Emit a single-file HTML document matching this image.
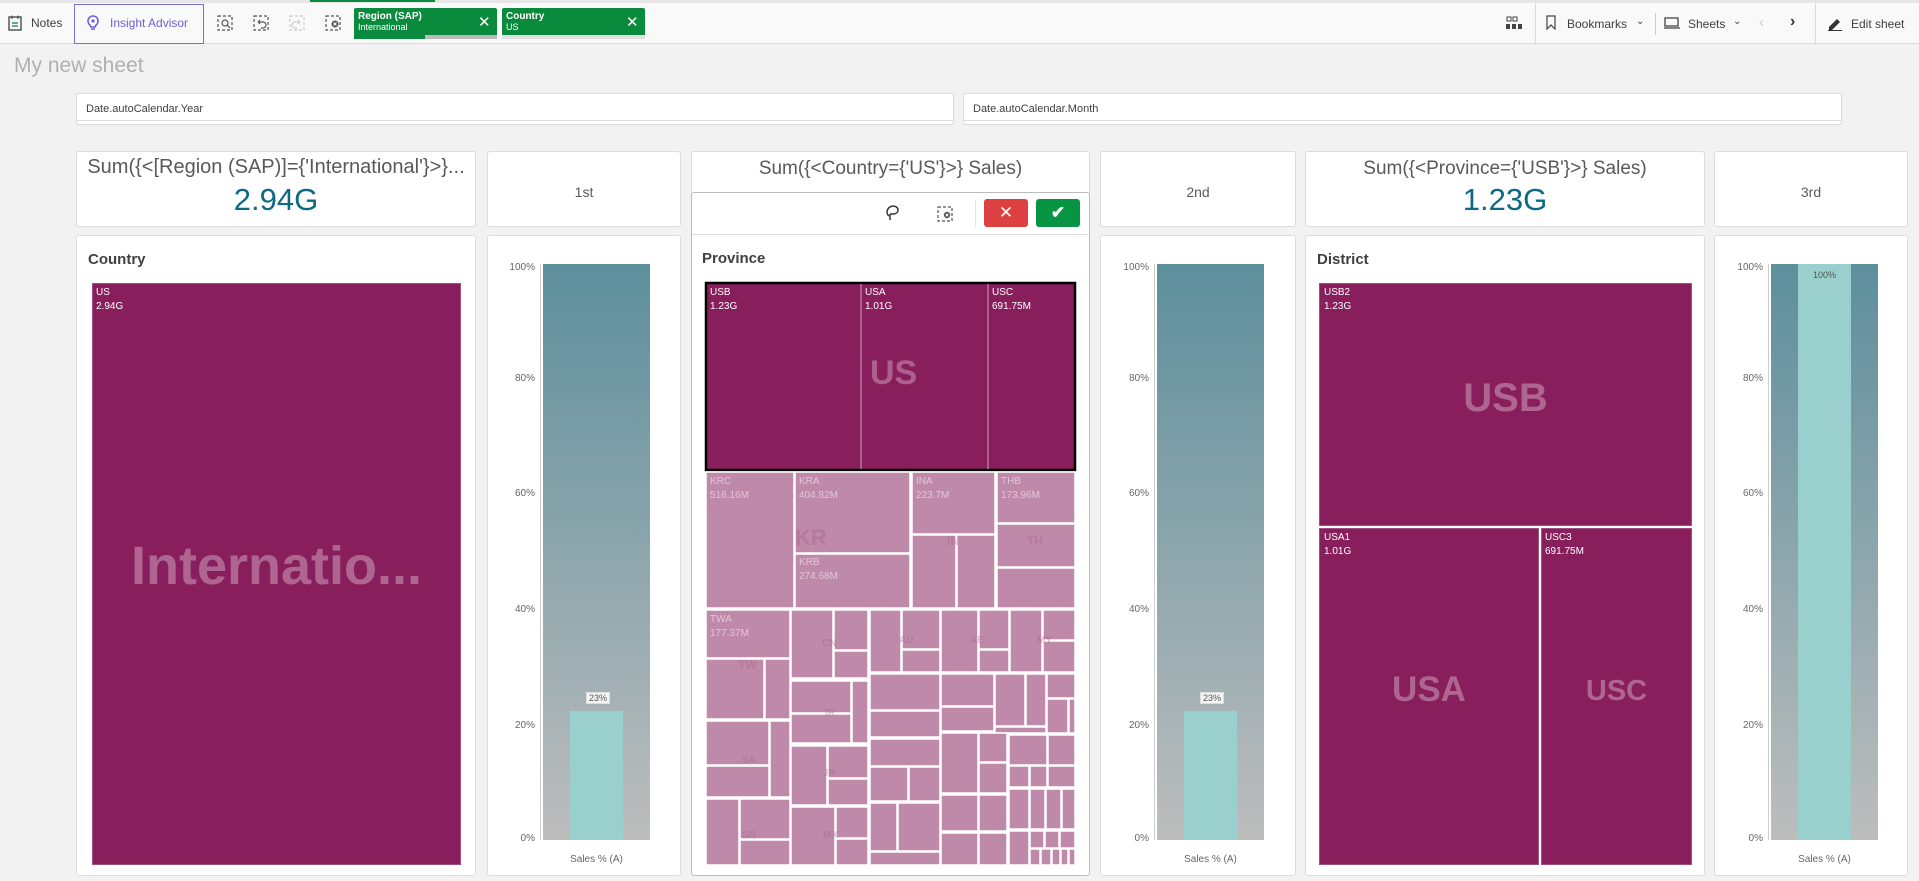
<!DOCTYPE html>
<html><head><meta charset="utf-8"><style>
*{box-sizing:border-box;margin:0;padding:0}
body{width:1919px;height:881px;background:#f2f2f2;font-family:"Liberation Sans",sans-serif;position:relative;overflow:hidden;color:#404040}
.a{position:absolute}
.panel{position:absolute;background:#fff;border:1px solid #dcdcdc;border-radius:3px}
.kt{position:absolute;left:0;right:0;text-align:center;font-size:19px;color:#595959;white-space:nowrap;overflow:hidden}
.kv{position:absolute;left:0;right:0;text-align:center;font-size:31px;color:#0e6a83}
.ttl{position:absolute;font-size:15px;font-weight:bold;color:#404040}
.lbl{position:absolute;font-size:10px;color:#fff;line-height:14px}
.ax{position:absolute;font-size:10px;color:#666;text-align:right;width:30px}
.tb{font-size:12px;color:#404040}
</style></head><body>
<div class="a" style="left:0;top:0;width:1919px;height:3px;background:#e6e6e6"></div>
<div class="a" style="left:310px;top:0;width:125px;height:2px;background:#0a8a3c"></div>
<div class="a" style="left:0;top:3px;width:1919px;height:41px;background:#f9f9f9;border-bottom:1px solid #dadada"></div>
<svg class="a" style="left:8px;top:15px" width="14" height="16" viewBox="0 0 14 16"><rect x="1" y="2" width="12" height="13" fill="none" stroke="#404040" stroke-width="1.3"/><line x1="4" y1="0.5" x2="4" y2="4" stroke="#404040"/><line x1="10" y1="0.5" x2="10" y2="4" stroke="#404040"/><line x1="4" y1="8" x2="10" y2="8" stroke="#0a8a3c" stroke-width="1.3"/><line x1="4" y1="11" x2="10" y2="11" stroke="#0a8a3c" stroke-width="1.3"/></svg>
<div class="a tb" style="left:31px;top:16px">Notes</div>
<div class="a" style="left:74px;top:4px;width:130px;height:40px;border:1px solid #7a6fd8;background:#f9f9f9"></div>
<svg class="a" style="left:87px;top:15px" width="12" height="16" viewBox="0 0 12 16"><path d="M6 1a5 5 0 0 1 3 9l-1 2H4l-1-2A5 5 0 0 1 6 1z" fill="none" stroke="#6b5fd3" stroke-width="1.6"/><circle cx="6" cy="6" r="1.6" fill="#6b5fd3"/><line x1="4" y1="14" x2="8" y2="14" stroke="#6b5fd3" stroke-width="1.5"/></svg>
<div class="a tb" style="left:110px;top:16px;color:#6b5fd3">Insight Advisor</div>
<svg class="a" style="left:217px;top:15px" width="130" height="16">
<g fill="none" stroke="#555" stroke-width="1.2" stroke-dasharray="3 2"><rect x="1" y="1" width="14" height="14"/><rect x="37" y="1" width="14" height="14"/><rect x="73" y="1" width="14" height="14" stroke="#ccc"/><rect x="109" y="1" width="14" height="14"/></g>
<circle cx="8" cy="8" r="3" fill="none" stroke="#555" stroke-width="1.2"/><line x1="10" y1="10" x2="13" y2="13" stroke="#555" stroke-width="1.2"/>
<path d="M41 7h5a3 3 0 0 1 0 6h-2M41 7l2-2M41 7l2 2" fill="none" stroke="#555" stroke-width="1.2"/>
<path d="M83 7h-5a3 3 0 0 0 0 6h2M83 7l-2-2M83 7l-2 2" fill="none" stroke="#ccc" stroke-width="1.2"/>
<circle cx="118" cy="9" r="3.5" fill="#555"/><path d="M116.5 7.5l3 3M119.5 7.5l-3 3" stroke="#fff" stroke-width="1"/></svg>
<div class="a" style="left:354px;top:8px;width:143px;height:28px;background:#0a8a3c;border-radius:2px"></div>
<div class="a" style="left:354px;top:35px;width:143px;height:4px;background:#bbb"></div>
<div class="a" style="left:354px;top:35px;width:71px;height:4px;background:#0a8a3c"></div>
<div class="a" style="left:358px;top:11px;font-size:10px;color:#fff;font-weight:bold;line-height:11px">Region (SAP)<br><span style="font-weight:normal;font-size:9px">International</span></div>
<div class="a" style="left:478px;top:13px;font-size:15px;color:#fff">✕</div>
<div class="a" style="left:502px;top:8px;width:143px;height:28px;background:#0a8a3c;border-radius:2px"></div>
<div class="a" style="left:502px;top:35px;width:143px;height:4px;background:#e0e0e0"></div>
<div class="a" style="left:506px;top:11px;font-size:10px;color:#fff;font-weight:bold;line-height:11px">Country<br><span style="font-weight:normal;font-size:9px">US</span></div>
<div class="a" style="left:626px;top:13px;font-size:15px;color:#fff">✕</div>
<svg class="a" style="left:1506px;top:16px" width="16" height="14"><rect x="1" y="1" width="4" height="4" fill="none" stroke="#444"/><rect x="7" y="1" width="4" height="4" fill="none" stroke="#444"/><rect x="0" y="8" width="4" height="5" fill="#444"/><rect x="6" y="8" width="4" height="5" fill="#444"/><rect x="12" y="8" width="4" height="5" fill="#444"/></svg>
<div class="a" style="left:1535px;top:3px;width:1px;height:41px;background:#dadada"></div>
<svg class="a" style="left:1546px;top:15px" width="10" height="15"><path d="M1 1h8v13l-4-4-4 4z" fill="none" stroke="#444" stroke-width="1.2"/></svg>
<div class="a tb" style="left:1567px;top:17px">Bookmarks</div>
<div class="a" style="left:1636px;top:16px;font-size:10px">⌄</div>
<div class="a" style="left:1655px;top:13px;width:1px;height:22px;background:#ccc"></div>
<svg class="a" style="left:1664px;top:17px" width="16" height="12"><rect x="1" y="1" width="13" height="8" fill="none" stroke="#444" stroke-width="1.3"/><line x1="0" y1="11" x2="16" y2="11" stroke="#444" stroke-width="1.3"/></svg>
<div class="a tb" style="left:1688px;top:17px">Sheets</div>
<div class="a" style="left:1733px;top:16px;font-size:10px">⌄</div>
<div class="a" style="left:1759px;top:14px;font-size:15px;color:#ccc">‹</div>
<div class="a" style="left:1790px;top:13px;font-size:16px;color:#333;font-weight:bold">›</div>
<div class="a" style="left:1815px;top:3px;width:1px;height:41px;background:#dadada"></div>
<svg class="a" style="left:1827px;top:15px" width="16" height="16"><path d="M2 12l8-8 3 3-8 8H2z" fill="#333"/><line x1="1" y1="15.5" x2="15" y2="15.5" stroke="#333"/></svg>
<div class="a tb" style="left:1851px;top:17px">Edit sheet</div>

<div class="a" style="left:14px;top:54px;font-size:21px;color:#b0b0b0">My new sheet</div>

<div class="panel" style="left:76px;top:93px;width:878px;height:32px;border-radius:2px"><div class="a" style="left:9px;top:9px;font-size:11px;color:#404040">Date.autoCalendar.Year</div><div class="a" style="left:0;right:0;bottom:3px;height:1px;background:#ddd"></div></div>
<div class="panel" style="left:963px;top:93px;width:879px;height:32px;border-radius:2px"><div class="a" style="left:9px;top:9px;font-size:11px;color:#404040">Date.autoCalendar.Month</div><div class="a" style="left:0;right:0;bottom:3px;height:1px;background:#ddd"></div></div>

<div class="panel" style="left:76px;top:151px;width:400px;height:76px"><div class="kt" style="top:4px;font-size:20px">Sum({&lt;[Region (SAP)]={'International'}&gt;}...</div><div class="kv" style="top:30px">2.94G</div></div>
<div class="panel" style="left:487px;top:151px;width:194px;height:76px"><div class="kt" style="top:32px;font-size:14px">1st</div></div>
<div class="panel" style="left:691px;top:151px;width:399px;height:76px;border-bottom:none"><div class="kt" style="top:6px;font-size:19px">Sum({&lt;Country={'US'}&gt;} Sales)</div></div>
<div class="panel" style="left:1100px;top:151px;width:196px;height:76px"><div class="kt" style="top:32px;font-size:14px">2nd</div></div>
<div class="panel" style="left:1305px;top:151px;width:400px;height:76px"><div class="kt" style="top:6px;font-size:19px">Sum({&lt;Province={'USB'}&gt;} Sales)</div><div class="kv" style="top:30px">1.23G</div></div>
<div class="panel" style="left:1714px;top:151px;width:194px;height:76px"><div class="kt" style="top:32px;font-size:14px">3rd</div></div>

<div class="panel" style="left:76px;top:235px;width:400px;height:641px">
<div class="ttl" style="left:11px;top:15px">Country</div></div>
<div class="a" style="left:92px;top:283px;width:369px;height:582px;background:#881e5c;border:1px solid #a0507e"></div>
<div class="lbl" style="left:96px;top:286px">US<br>2.94G</div>
<div class="a" style="left:92px;top:535px;width:369px;text-align:center;font-size:54px;font-weight:bold;color:rgba(255,255,255,0.32);white-space:nowrap">Internatio...</div>

<div class="panel" style="left:487px;top:235px;width:194px;height:641px"></div>
<div class="a" style="left:543px;top:264px;width:107px;height:576px;background:linear-gradient(#5d8f9c,#bdbdbd)"></div>
<div class="a" style="left:570px;top:711px;width:53px;height:129px;background:#99cfcc"></div>
<div class="a" style="left:586px;top:692px;font-size:9px;color:#555;background:#f4f4f4;border:1px solid #ddd;padding:0 2px">23%</div>
<div class="a" style="left:540px;top:264px;width:1px;height:576px;background:#ccc"></div>
<div class="ax" style="left:505px;top:262px">100%</div><div class="ax" style="left:505px;top:373px">80%</div><div class="ax" style="left:505px;top:488px">60%</div><div class="ax" style="left:505px;top:604px">40%</div><div class="ax" style="left:505px;top:720px">20%</div><div class="ax" style="left:505px;top:833px">0%</div>
<div class="a" style="left:543px;top:854px;width:107px;text-align:center;font-size:10px;color:#666">Sales % (A)</div>

<div class="a" style="left:691px;top:192px;width:399px;height:684px;background:#fff;border:1px solid #bcbcbc;border-radius:3px"></div>
<div class="a" style="left:692px;top:234px;width:397px;height:1px;background:#ddd"></div>
<svg class="a" style="left:885px;top:204px" width="16" height="18"><path d="M4 12C1 10 1 3 8 2c6 0 7 7 1 8H5" fill="none" stroke="#333" stroke-width="1.5"/><path d="M5 10v6" stroke="#333" stroke-width="1.5"/></svg>
<svg class="a" style="left:937px;top:206px" width="16" height="16"><rect x="1" y="1" width="14" height="14" fill="none" stroke="#555" stroke-dasharray="3 2" stroke-width="1.2"/><circle cx="10" cy="9" r="3.2" fill="#555"/><path d="M8.7 7.7l2.6 2.6M11.3 7.7l-2.6 2.6" stroke="#fff" stroke-width="0.9"/></svg>
<div class="a" style="left:975px;top:200px;width:1px;height:27px;background:#e3e3e3"></div>
<div class="a" style="left:984px;top:199px;width:44px;height:28px;background:#dc4040;border-radius:3px;color:#fff;text-align:center;font-size:17px;line-height:28px">✕</div>
<div class="a" style="left:1036px;top:199px;width:44px;height:28px;background:#079443;border-radius:3px;color:#fff;text-align:center;font-size:17px;line-height:28px;font-weight:bold">✔</div>
<div class="ttl" style="left:702px;top:250px">Province</div>
<svg class="a" style="left:704px;top:281px" width="374" height="586">
<g transform="translate(-704,-281)">
<rect x="706" y="283" width="369" height="187" fill="#881e5c" stroke="#000" stroke-width="2.5"/>
<line x1="861" y1="284" x2="861" y2="469" stroke="#c68aac" stroke-width="1.2"/>
<line x1="988" y1="284" x2="988" y2="469" stroke="#c68aac" stroke-width="1.2"/>
<text x="870" y="384" font-size="34" font-weight="bold" fill="rgba(255,255,255,0.3)" font-family="Liberation Sans">US</text>
<g font-family="Liberation Sans" font-size="10" fill="#fff">
<text x="710" y="295">USB</text><text x="710" y="309">1.23G</text>
<text x="865" y="295">USA</text><text x="865" y="309">1.01G</text>
<text x="992" y="295">USC</text><text x="992" y="309">691.75M</text>
</g>
<g fill="#bf8aa9" stroke="#fff" stroke-width="1.5">
<rect x="706" y="472" width="88" height="136"/>
<rect x="795" y="472" width="115" height="81"/><rect x="795" y="554" width="115" height="54"/>
<rect x="912" y="472" width="83" height="62"/><rect x="912" y="535" width="44" height="73"/><rect x="957" y="535" width="38" height="73"/>
<rect x="997" y="472" width="78" height="51"/><rect x="997" y="524" width="78" height="43"/><rect x="997" y="568" width="78" height="40"/>
<rect x="706" y="610" width="84" height="48"/><rect x="706" y="659" width="58" height="60"/><rect x="765" y="659" width="25" height="60"/>
<rect x="706" y="721" width="63" height="44"/><rect x="706" y="766" width="63" height="31"/><rect x="770" y="721" width="20" height="76"/>
<rect x="706" y="799" width="33" height="66"/><rect x="740" y="799" width="50" height="40"/><rect x="740" y="840" width="50" height="25"/>
<rect x="791" y="610" width="42" height="68"/><rect x="834" y="610" width="34" height="40"/><rect x="834" y="651" width="34" height="27"/>
<rect x="791" y="681" width="60" height="32"/><rect x="791" y="714" width="60" height="29"/><rect x="852" y="681" width="16" height="62"/>
<rect x="791" y="746" width="36" height="59"/><rect x="828" y="746" width="40" height="32"/><rect x="828" y="779" width="40" height="26"/>
<rect x="791" y="807" width="44" height="58"/><rect x="836" y="807" width="32" height="31"/><rect x="836" y="839" width="32" height="26"/>
<rect x="870" y="610" width="31" height="62"/><rect x="902" y="610" width="38" height="39"/><rect x="902" y="650" width="38" height="22"/>
<rect x="870" y="674" width="70" height="36"/><rect x="870" y="711" width="70" height="26"/>
<rect x="870" y="739" width="70" height="27"/><rect x="870" y="767" width="38" height="34"/><rect x="909" y="767" width="31" height="34"/>
<rect x="870" y="803" width="27" height="48"/><rect x="898" y="803" width="42" height="48"/><rect x="870" y="852" width="70" height="13"/>
<rect x="941" y="610" width="37" height="62"/><rect x="979" y="610" width="30" height="39"/><rect x="979" y="650" width="30" height="22"/>
<rect x="1010" y="610" width="32" height="62"/><rect x="1043" y="610" width="32" height="30"/><rect x="1043" y="641" width="32" height="31"/>
<rect x="941" y="674" width="53" height="32"/><rect x="941" y="707" width="53" height="24"/>
<rect x="995" y="674" width="30" height="52"/><rect x="1026" y="674" width="20" height="52"/><rect x="995" y="727" width="51" height="6"/>
<rect x="1047" y="674" width="28" height="24"/><rect x="1047" y="699" width="21" height="34"/><rect x="1069" y="699" width="6" height="34"/>
<rect x="941" y="733" width="37" height="60"/><rect x="979" y="733" width="28" height="29"/><rect x="979" y="763" width="28" height="30"/>
<rect x="941" y="795" width="37" height="36"/><rect x="979" y="795" width="28" height="36"/><rect x="941" y="833" width="37" height="32"/><rect x="979" y="833" width="28" height="32"/>
<rect x="1009" y="735" width="38" height="30"/><rect x="1009" y="766" width="20" height="21"/><rect x="1030" y="766" width="17" height="21"/>
<rect x="1048" y="735" width="27" height="30"/><rect x="1048" y="766" width="27" height="21"/>
<rect x="1009" y="789" width="20" height="40"/><rect x="1030" y="789" width="15" height="40"/><rect x="1046" y="789" width="15" height="40"/><rect x="1062" y="789" width="13" height="40"/>
<rect x="1009" y="831" width="20" height="34"/><rect x="1030" y="831" width="14" height="17"/><rect x="1045" y="831" width="14" height="17"/><rect x="1060" y="831" width="15" height="17"/>
<rect x="1030" y="849" width="10" height="16"/><rect x="1041" y="849" width="10" height="16"/><rect x="1052" y="849" width="8" height="16"/><rect x="1061" y="849" width="7" height="16"/><rect x="1069" y="849" width="6" height="16"/>
</g>
<g font-family="Liberation Sans" font-size="10" fill="#e3c5d6">
<text x="710" y="484">KRC</text><text x="710" y="498">516.16M</text>
<text x="799" y="484">KRA</text><text x="799" y="498">404.82M</text>
<text x="799" y="565">KRB</text><text x="799" y="579">274.68M</text>
<text x="916" y="484">INA</text><text x="916" y="498">223.7M</text>
<text x="1001" y="484">THB</text><text x="1001" y="498">173.96M</text>
<text x="710" y="622">TWA</text><text x="710" y="636">177.37M</text>
</g>
<g font-family="Liberation Sans" fill="rgba(160,90,130,0.35)" font-weight="bold">
<text x="795" y="545" font-size="22">KR</text><text x="947" y="545" font-size="12">IN</text><text x="1027" y="545" font-size="12">TH</text>
<text x="738" y="669" font-size="12">TW</text><text x="742" y="763" font-size="10">SA</text><text x="742" y="838" font-size="10">SG</text>
<text x="822" y="646" font-size="10">CN</text><text x="825" y="716" font-size="10">IR</text><text x="823" y="776" font-size="10">JP</text><text x="823" y="838" font-size="10">MX</text>
<text x="899" y="643" font-size="10">AU</text><text x="970" y="643" font-size="10">AE</text><text x="1037" y="643" font-size="10">MY</text>
</g>
</g></svg>

<div class="panel" style="left:1100px;top:235px;width:196px;height:641px"></div>
<div class="a" style="left:1157px;top:264px;width:107px;height:576px;background:linear-gradient(#5d8f9c,#bdbdbd)"></div>
<div class="a" style="left:1184px;top:711px;width:53px;height:129px;background:#99cfcc"></div>
<div class="a" style="left:1200px;top:692px;font-size:9px;color:#555;background:#f4f4f4;border:1px solid #ddd;padding:0 2px">23%</div>
<div class="a" style="left:1154px;top:264px;width:1px;height:576px;background:#ccc"></div>
<div class="ax" style="left:1119px;top:262px">100%</div><div class="ax" style="left:1119px;top:373px">80%</div><div class="ax" style="left:1119px;top:488px">60%</div><div class="ax" style="left:1119px;top:604px">40%</div><div class="ax" style="left:1119px;top:720px">20%</div><div class="ax" style="left:1119px;top:833px">0%</div>
<div class="a" style="left:1157px;top:854px;width:107px;text-align:center;font-size:10px;color:#666">Sales % (A)</div>

<div class="panel" style="left:1305px;top:235px;width:400px;height:641px"><div class="ttl" style="left:11px;top:15px">District</div></div>
<div class="a" style="left:1319px;top:283px;width:373px;height:243px;background:#881e5c;border:1px solid #a0507e"></div>
<div class="lbl" style="left:1324px;top:286px">USB2<br>1.23G</div>
<div class="a" style="left:1319px;top:376px;width:373px;text-align:center;font-size:40px;font-weight:bold;color:rgba(255,255,255,0.32)">USB</div>
<div class="a" style="left:1319px;top:528px;width:220px;height:337px;background:#881e5c;border:1px solid #a0507e"></div>
<div class="lbl" style="left:1324px;top:531px">USA1<br>1.01G</div>
<div class="a" style="left:1319px;top:670px;width:220px;text-align:center;font-size:35px;font-weight:bold;color:rgba(255,255,255,0.32)">USA</div>
<div class="a" style="left:1541px;top:528px;width:151px;height:337px;background:#881e5c;border:1px solid #a0507e"></div>
<div class="lbl" style="left:1545px;top:531px">USC3<br>691.75M</div>
<div class="a" style="left:1541px;top:675px;width:151px;text-align:center;font-size:29px;font-weight:bold;color:rgba(255,255,255,0.32)">USC</div>

<div class="panel" style="left:1714px;top:235px;width:194px;height:641px"></div>
<div class="a" style="left:1771px;top:264px;width:107px;height:576px;background:linear-gradient(#5d8f9c,#bdbdbd)"></div>
<div class="a" style="left:1798px;top:264px;width:53px;height:576px;background:#99cfcc"></div>
<div class="a" style="left:1798px;top:270px;width:53px;text-align:center;font-size:9px;color:#555">100%</div>
<div class="a" style="left:1768px;top:264px;width:1px;height:576px;background:#ccc"></div>
<div class="ax" style="left:1733px;top:262px">100%</div><div class="ax" style="left:1733px;top:373px">80%</div><div class="ax" style="left:1733px;top:488px">60%</div><div class="ax" style="left:1733px;top:604px">40%</div><div class="ax" style="left:1733px;top:720px">20%</div><div class="ax" style="left:1733px;top:833px">0%</div>
<div class="a" style="left:1771px;top:854px;width:107px;text-align:center;font-size:10px;color:#666">Sales % (A)</div>
</body></html>
